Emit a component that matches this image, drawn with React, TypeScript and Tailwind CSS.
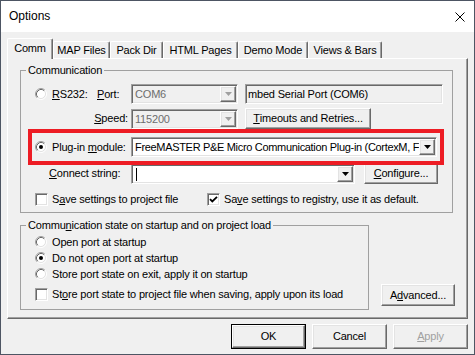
const raised =
  "border border-t-white border-l-white border-r-[#696969] border-b-[#696969] shadow-[inset_-1px_-1px_0_#a0a0a0,inset_1px_1px_0_#e3e3e3] bg-[#f0f0f0]";
const sunken =
  "border border-t-[#a0a0a0] border-l-[#a0a0a0] border-r-white border-b-white shadow-[inset_1px_1px_0_#696969,inset_-1px_-1px_0_#e3e3e3] p-px";

export default function App() {
  return (
    <div className="w-[475px] h-[355px] border border-[#4d5563] bg-[#f0f0f0] flex flex-col font-['Liberation_Sans',Arial,sans-serif] text-[11px] leading-[13px] tracking-[-0.18px] text-black">
      <div className="h-[31px] bg-white flex items-center justify-between pl-[8px] pr-[9px]">
        <span className="text-[12px] tracking-normal">Options</span>
        <svg width="10" height="10" viewBox="0 0 10 10">
          <path d="M0.5 0.5 L9.5 9.5 M9.5 0.5 L0.5 9.5" stroke="#000" strokeWidth="1" />
        </svg>
      </div>

      <div className="flex flex-col pl-[6px]">
        <TabStrip />

        <div className="w-[461px] h-[261px] border border-t-white border-l-white border-r-[#696969] border-b-[#696969] shadow-[inset_-1px_-1px_0_#a0a0a0]">
          <CommunicationGroup />
          <StartupGroup />
        </div>

        <div className="w-[461px] flex justify-end gap-[6px] mt-[5px]">
          <Button className="w-[75px] h-[25px]" isDefault>
            OK
          </Button>
          <Button className="w-[75px] h-[25px]">Cancel</Button>
          <Button className="w-[75px] h-[25px]" disabled>
            <u>A</u>pply
          </Button>
        </div>
      </div>
    </div>
  );
}

const tabs = [
  { label: "Comm", w: "w-[46px]" },
  { label: "MAP Files", w: "w-[57px]" },
  { label: "Pack Dir", w: "w-[53px]" },
  { label: "HTML Pages", w: "w-[75px]" },
  { label: "Demo Mode", w: "w-[70px]" },
  { label: "Views & Bars", w: "w-[74px]" },
];

function TabStrip() {
  return (
    <div className="flex items-end h-[20px] mt-[6px]">
      {tabs.map((tab, i) =>
        i === 0 ? (
          <div
            key={tab.label}
            className={`${tab.w} h-[21px] -mb-px relative z-10 bg-[#f0f0f0] rounded-t-[2px] border border-b-0 border-t-white border-l-white border-r-[#696969] shadow-[inset_-1px_0_0_#a0a0a0] flex items-center justify-center pb-[2px]`}
          >
            {tab.label}
          </div>
        ) : (
          <div
            key={tab.label}
            className={`${tab.w} h-[17px] rounded-t-[2px] border border-b-0 border-t-white border-l-white border-r-[#696969] shadow-[inset_-1px_0_0_#a0a0a0] flex items-center justify-center whitespace-nowrap`}
          >
            {tab.label}
          </div>
        )
      )}
    </div>
  );
}

function CommunicationGroup() {
  return (
    <fieldset className="ml-[12px] mt-[5px] w-[433px] border border-[#a0a0a0] pb-[6px]">
      <legend className="ml-[5px] px-[2px] leading-[12px]">Communication</legend>

      <div className="flex items-center h-[20px] mt-[8px]">
        <div className="ml-[14px]">
          <Radio />
        </div>
        <span className="ml-[5px] w-[45px]">
          <u>R</u>S232:
        </span>
        <span className="w-[34px]">
          <u>P</u>ort:
        </span>
        <Combo className="w-[107px]" text="COM6" disabled />
        <div className={`${sunken} ml-[7px] w-[198px] h-[20px] bg-[#f0f0f0] pl-[2px] leading-[16px] whitespace-nowrap`}>
          mbed Serial Port (COM6)
        </div>
      </div>

      <div className="flex items-center h-[21px] mt-[4px]">
        <span className="w-[110px] text-right pr-[3px]">
          <u>S</u>peed:
        </span>
        <Combo className="w-[107px]" text="115200" disabled />
        <Button className="ml-[7px] w-[126px] h-[21px]">
          <u>T</u>imeouts and Retries...
        </Button>
      </div>

      <div className="relative flex items-center h-[20px] mt-[8px]">
        <div className="ml-[14px]">
          <Radio checked />
        </div>
        <span className="ml-[5px] w-[79px]">
          Plug-in <u>m</u>odule:
        </span>
        <Combo
          className="w-[306px]"
          textClass="tracking-[-0.32px]"
          text="FreeMASTER P&E Micro Communication Plug-in (CortexM, F"
        />
        <div className="pointer-events-none absolute left-[7px] top-[-8px] w-[416px] h-[36px] border-[4px] border-[#ed1c24]" />
      </div>

      <div className="flex items-center h-[21px] mt-[6px]">
        <span className="ml-[28px] w-[82px]">
          <u>C</u>onnect string:
        </span>
        <Combo className="w-[224px]" text="" caret />
        <Button className="ml-[9px] w-[74px] h-[21px]">
          <u>C</u>onfigure...
        </Button>
      </div>

      <div className="flex items-center h-[13px] mt-[9px]">
        <div className="ml-[14px]">
          <Check />
        </div>
        <span className="ml-[4px] w-[155px]">
          S<u>a</u>ve settings to project file
        </span>
        <Check checked />
        <span className="ml-[4px]">
          Sa<u>v</u>e settings to registry, use it as default.
        </span>
      </div>
    </fieldset>
  );
}

function StartupGroup() {
  return (
    <div className="flex items-end ml-[12px] mt-[6px]">
      <fieldset className="w-[349px] border border-[#a0a0a0] pb-[8px]">
        <legend className="ml-[5px] px-[2px] leading-[12px]">
          Commu<u>n</u>ication state on startup and on project load
        </legend>
        <div className="mt-[3px]">
          <RadioRow label="Open port at startup" />
          <RadioRow label="Do not open port at startup" checked />
          <RadioRow label="Store port state on exit, apply it on startup" />
        </div>
        <div className="flex items-center h-[13px] mt-[6px]">
          <div className="ml-[14px]">
            <Check />
          </div>
          <span className="ml-[4px] whitespace-nowrap">
            St<u>o</u>re port state to project file when saving, apply upon its load
          </span>
        </div>
      </fieldset>
      <Button className="ml-[12px] mb-[4px] w-[74px] h-[22px]">
        A<u>d</u>vanced...
      </Button>
    </div>
  );
}

function RadioRow({ label, checked = false }: { label: string; checked?: boolean }) {
  return (
    <div className="flex items-center h-[16px]">
      <div className="ml-[14px]">
        <Radio checked={checked} />
      </div>
      <span className="ml-[5px]">{label}</span>
    </div>
  );
}

interface ButtonProps {
  children: React.ReactNode;
  className?: string;
  disabled?: boolean;
  isDefault?: boolean;
}

function Button({ children, className = "", disabled = false, isDefault = false }: ButtonProps) {
  return (
    <div className={`${isDefault ? "border border-black" : ""} ${className}`}>
      <div
        className={`${raised} w-full h-full flex items-center justify-center whitespace-nowrap ${
          disabled ? "text-[#a0a0a0]" : "text-black"
        }`}
      >
        {children}
      </div>
    </div>
  );
}

interface ComboProps {
  className?: string;
  textClass?: string;
  text: string;
  disabled?: boolean;
  caret?: boolean;
}

function Combo({ className = "", textClass = "", text, disabled = false, caret = false }: ComboProps) {
  return (
    <div className={`${sunken} ${className} h-[20px] flex ${disabled ? "bg-[#f0f0f0]" : "bg-white"}`}>
      <div
        className={`flex-1 overflow-hidden whitespace-nowrap pl-[2px] leading-[16px] ${textClass} ${
          disabled ? "text-[#6d6d6d]" : "text-black"
        }`}
      >
        {caret ? <div className="ml-px mt-[2px] w-px h-[13px] bg-black" /> : text}
      </div>
      <div className={`${raised} w-[16px] h-full flex items-center justify-center`}>
        <svg width="7" height="4" viewBox="0 0 7 4">
          <polygon points="0,0 7,0 3.5,4" fill={disabled ? "#a0a0a0" : "#000"} />
        </svg>
      </div>
    </div>
  );
}

function Radio({ checked = false }: { checked?: boolean }) {
  return (
    <svg width="12" height="12" viewBox="0 0 12 12" className="block">
      <circle cx="6" cy="6" r="4.5" fill="#fff" />
      <path d="M2.11 9.89 A5.5 5.5 0 0 1 9.89 2.11" fill="none" stroke="#a0a0a0" />
      <path d="M9.89 2.11 A5.5 5.5 0 0 1 2.11 9.89" fill="none" stroke="#fff" />
      <path d="M2.82 9.18 A4.5 4.5 0 0 1 9.18 2.82" fill="none" stroke="#696969" />
      <path d="M9.18 2.82 A4.5 4.5 0 0 1 2.82 9.18" fill="none" stroke="#e3e3e3" />
      {checked && <circle cx="6" cy="6" r="2" fill="#000" />}
    </svg>
  );
}

function Check({ checked = false }: { checked?: boolean }) {
  return (
    <div className={`${sunken} w-[13px] h-[13px] bg-white flex items-center justify-center`}>
      {checked && (
        <svg width="9" height="9" viewBox="0 0 9 9" className="block">
          <path d="M1 4.2 L3.3 6.5 L8 1.8" fill="none" stroke="#000" strokeWidth="1.8" />
        </svg>
      )}
    </div>
  );
}
